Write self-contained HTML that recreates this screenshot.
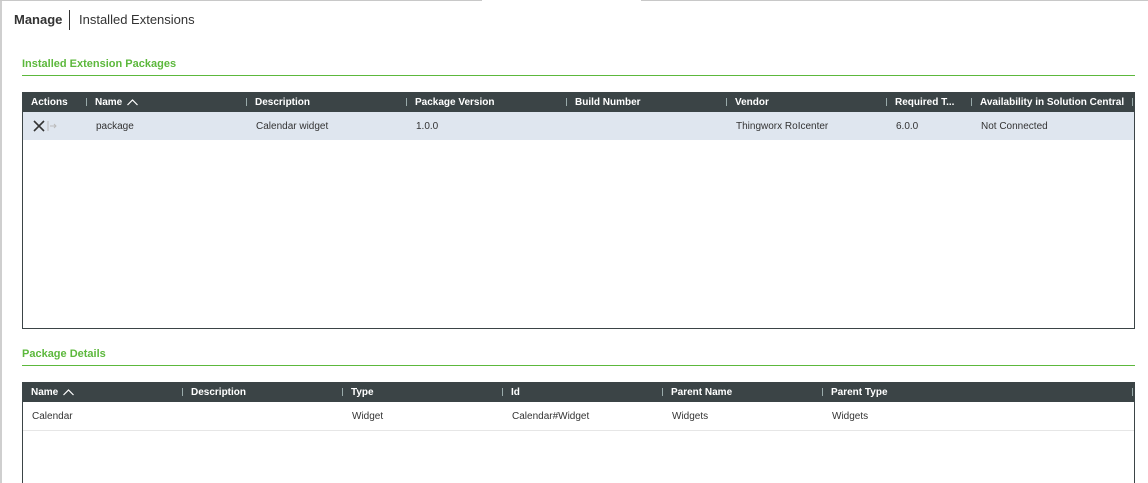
<!DOCTYPE html>
<html><head><style>
*{margin:0;padding:0;box-sizing:border-box}
html,body{width:1148px;height:483px;overflow:hidden}
body{background:#fff;font-family:"Liberation Sans",Arial,sans-serif;position:relative;color:#333}
.a{position:absolute}
.hd{background:#3b4446;color:#fff;font-weight:bold;font-size:10px;height:20px}
.hd span,.rw span{position:absolute;top:0;line-height:21px;white-space:nowrap}
.sep{position:absolute;top:6px;width:1px;height:8px;background:#9aa}
.rw{font-size:10px;color:#333;height:28px}
.rw span{line-height:30px}
.h2{color:#5cb83c;font-weight:bold;font-size:11px}
.gl{height:1px;background:#5cb83c}
.chev{position:absolute;top:7px}
</style></head><body>
<div class="a" style="left:0;top:0;width:2px;height:483px;background:#cfcfcf"></div>
<div class="a" style="left:0;top:0;width:482px;height:1px;background:#c8c8c8"></div>
<div class="a" style="left:641px;top:0;width:507px;height:1px;background:#c8c8c8"></div>
<div class="a" style="left:14px;top:12px;font-size:13px;font-weight:bold;color:#333">Manage</div>
<div class="a" style="left:69px;top:10px;width:1px;height:20px;background:#333"></div>
<div class="a" style="left:79px;top:12px;font-size:13px;color:#333">Installed Extensions</div>

<div class="a h2" style="left:22px;top:58px">Installed Extension Packages</div>
<div class="a gl" style="left:22px;top:75px;width:1113px"></div>

<div class="a" style="left:22px;top:92px;width:1113px;height:237px;border:1px solid #3b4446;border-top:none"></div>
<div class="a hd" style="left:22px;top:92px;width:1113px">
<span style="left:9px">Actions</span>
<div class="sep" style="left:64px"></div><span style="left:73px">Name</span>
<svg class="chev" style="left:105px" width="11" height="7"><path d="M0.5 6L5.5 1L10.5 6" stroke="#fff" fill="none" stroke-width="1.2"/></svg>
<div class="sep" style="left:224px"></div><span style="left:233px">Description</span>
<div class="sep" style="left:384px"></div><span style="left:393px">Package Version</span>
<div class="sep" style="left:544px"></div><span style="left:553px">Build Number</span>
<div class="sep" style="left:704px"></div><span style="left:713px">Vendor</span>
<div class="sep" style="left:864px"></div><span style="left:873px">Required T...</span>
<div class="sep" style="left:949px"></div><span style="left:958px">Availability in Solution Central</span>
<div class="sep" style="left:1110px"></div>
</div>
<div class="a rw" style="left:23px;top:112px;width:1111px;background:#dfe6ef">
<svg style="position:absolute;left:10px;top:8px" width="12" height="12"><path d="M1 1L11 11M11 1L1 11" stroke="#333" stroke-width="1.6"/></svg>
<svg style="position:absolute;left:24px;top:9px" width="10" height="10"><path d="M1 0V10M3 5H9M7 3L9 5L7 7" stroke="#bbb" stroke-width="1" fill="none"/></svg>
<span style="left:73px">package</span><span style="left:233px">Calendar widget</span><span style="left:393px">1.0.0</span>
<span style="left:713px">Thingworx RoIcenter</span><span style="left:873px">6.0.0</span><span style="left:958px">Not Connected</span>
</div>

<div class="a h2" style="left:22px;top:348px">Package Details</div>
<div class="a gl" style="left:22px;top:365px;width:1113px"></div>

<div class="a" style="left:22px;top:382px;width:1113px;height:101px;border-left:1px solid #3b4446;border-right:1px solid #3b4446"></div>
<div class="a hd" style="left:22px;top:382px;width:1113px">
<span style="left:9px">Name</span>
<svg class="chev" style="left:41px" width="11" height="7"><path d="M0.5 6L5.5 1L10.5 6" stroke="#fff" fill="none" stroke-width="1.2"/></svg>
<div class="sep" style="left:160px"></div><span style="left:169px">Description</span>
<div class="sep" style="left:320px"></div><span style="left:329px">Type</span>
<div class="sep" style="left:480px"></div><span style="left:489px">Id</span>
<div class="sep" style="left:640px"></div><span style="left:649px">Parent Name</span>
<div class="sep" style="left:800px"></div><span style="left:809px">Parent Type</span>
<div class="sep" style="left:1110px"></div>
</div>
<div class="a rw" style="left:23px;top:402px;width:1111px;border-bottom:1px solid #e6e6e6;height:29px">
<span style="left:9px">Calendar</span><span style="left:329px">Widget</span><span style="left:489px">Calendar#Widget</span><span style="left:649px">Widgets</span><span style="left:809px">Widgets</span>
</div>
</body></html>
